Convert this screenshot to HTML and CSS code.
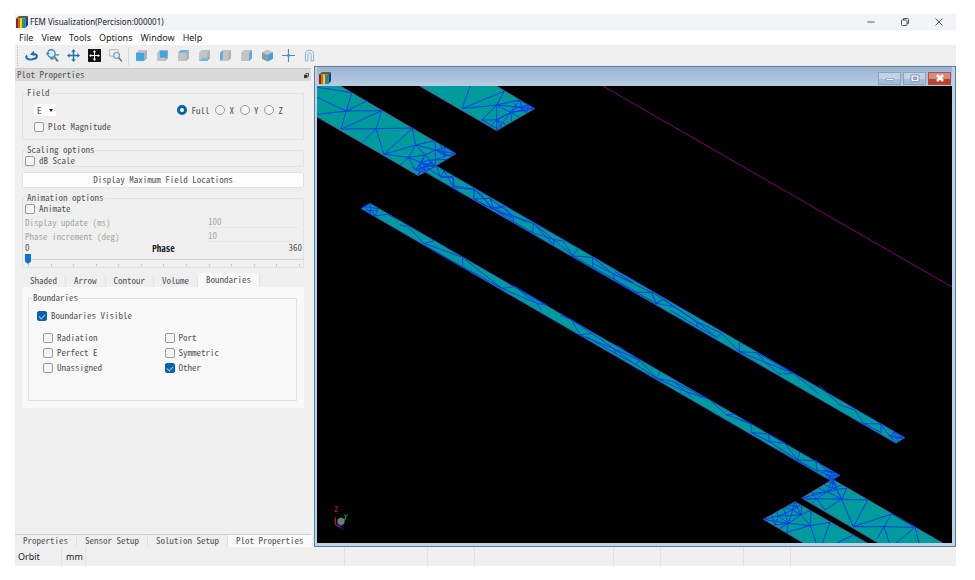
FILE: index.html
```html
<!DOCTYPE html>
<html lang="en">
<head>
    <meta charset="UTF-8">
    <meta name="viewport" content="width=device-width, initial-scale=1.0">
    <title>FEM Visualization</title>
    <link rel="stylesheet" href="styles.css">
</head>
<body>
    <svg class="defs" aria-hidden="true">
        <symbol id="logo" viewBox="0 0 12 12">
            <path d="M0 2.500 3 0h9L9.500 2.500z" fill="#6b5a2a"/>
            <path d="M9.500 2.500 12 0v9l-2.500 3z" fill="#1c3b8c"/>
            <path d="M0 2.500h2V12H0z" fill="#8e1f1f"/>
            <path d="M2 2.500h2V12H2z" fill="#d9641e"/>
            <path d="M4 2.500h2V12H4z" fill="#e8d42c"/>
            <path d="M6 2.500h2V12H6z" fill="#2f9c48"/>
            <path d="M8 2.500h1.500V12H8z" fill="#1e78c8"/>
        </symbol>
        <symbol id="cube" viewBox="0 0 12 12">
            <path d="M1 3.500 3.500 1H11v7.500L8.500 11H1z" fill="#c3c3c3"/>
            <path d="M8.500 3.500 11 1v7.500L8.500 11z" fill="#aeb2b5"/>
        </symbol>
    </svg>

    <div class="app">
        <header class="titlebar">
            <svg class="logo"><use href="#logo"/></svg>
            <span class="title">FEM Visualization(Percision:000001)</span>
            <button class="win-btn" aria-label="Minimize"><svg viewBox="0 0 10 10"><path d="M1.500 5h7"/></svg></button>
            <button class="win-btn" aria-label="Restore"><svg viewBox="0 0 10 10"><rect x="1.500" y="3" width="5.500" height="5.500" rx="1"/><path d="M3.500 3V1.500h4q1 0 1 1v4H7"/></svg></button>
            <button class="win-btn" aria-label="Close"><svg viewBox="0 0 10 10"><path d="M1.500 1.500l7 7M8.500 1.500l-7 7"/></svg></button>
        </header>

        <nav class="menubar">
            <button>File</button>
            <button>View</button>
            <button>Tools</button>
            <button>Options</button>
            <button>Window</button>
            <button>Help</button>
        </nav>

        <div class="toolbar">
            <button aria-label="Orbit"><svg viewBox="0 0 12 12"><path d="M7 4.500c5-.5 5.500 4 0 5-5 .8-7-1.500-5-3.500" fill="none" stroke="#2374ad" stroke-width="2"/><path d="M8 1.500 4.500 5l4.500 1.500z" fill="#2374ad"/></svg></button>
            <button aria-label="Zoom"><svg viewBox="0 0 12 12"><circle cx="5" cy="4.200" r="3.500" fill="#d6eaf5" stroke="#3787b8" stroke-width="1.200"/><path d="M7.500 7l3.500 4.500" stroke="#777" stroke-width="1.800"/><path d="M0 4.200h3M8.500 5.500H12M7 9h-3" stroke="#3787b8" stroke-width="1.200"/></svg></button>
            <button aria-label="Pan"><svg viewBox="0 0 12 12"><path d="M6 0l2 2.500H6.700v2.800h2.800V4L12 6 9.500 8V6.700H6.700v2.800H8L6 12 4 9.500h1.300V6.700H2.500V8L0 6l2.500-2v1.300h2.800V2.500H4z" fill="#2374ad"/></svg></button>
            <button aria-label="Fit all"><svg viewBox="0 0 12 12"><path d="M0 0h12v12H0z" fill="#111"/><path d="M6 2.500v7M2.500 6h7" stroke="#fff"/><path d="M6 1l1.500 2h-3zM6 11l1.500-2h-3zM1 6l2-1.500v3zM11 6l-2-1.500v3z" fill="#fff"/></svg></button>
            <button aria-label="Zoom window"><svg viewBox="0 0 12 12"><path d="M.5 .5h8v6h-8z" fill="none" stroke="#aaa" stroke-width=".7"/><circle cx="7" cy="6" r="2.700" fill="#e0eef6" stroke="#6c9dba"/><path d="M9 8l3 3.500" stroke="#777" stroke-width="1.500"/></svg></button>
            <span class="sep"></span>
            <button aria-label="Front view"><svg viewBox="0 0 12 12"><use href="#cube"/><path d="M1 3.500h7.500V11H1z" fill="#43a5dd"/></svg></button>
            <button aria-label="Back view"><svg viewBox="0 0 12 12"><use href="#cube"/><path d="M3.500 1.500h7V8h-7z" fill="#43a5dd"/></svg></button>
            <button aria-label="Top view"><svg viewBox="0 0 12 12"><use href="#cube"/><path d="M1 3.500 3.500 1H11L8.500 3.500z" fill="#6bb9e4"/></svg></button>
            <button aria-label="Bottom view"><svg viewBox="0 0 12 12"><use href="#cube"/><path d="M1 11l2.500-2.500H11L8.500 11z" fill="#6bb9e4"/></svg></button>
            <button aria-label="Left view"><svg viewBox="0 0 12 12"><use href="#cube"/><path d="M1 3.500 3.500 1v7.500L1 11z" fill="#55afe1"/></svg></button>
            <button aria-label="Right view"><svg viewBox="0 0 12 12"><use href="#cube"/><path d="M8.500 3.500 11 1v7.500L8.500 11z" fill="#55afe1"/></svg></button>
            <button aria-label="Isometric view"><svg viewBox="0 0 12 12"><path d="M6 .5 11 3v6l-5 2.500L1 9V3z" fill="#c3c3c3"/><path d="M1 3l5 2.500v6L1 9z" fill="#8e9aa1"/><path d="M6 5.500 11 3v6l-5 2.500z" fill="#3f9fd6"/></svg></button>
            <button aria-label="Center"><svg viewBox="0 0 12 12"><path d="M6 0v12M0 6h12" stroke="#4a90ba"/><circle cx="6" cy="6" r="1.300" fill="#4a90ba"/></svg></button>
            <button aria-label="Snap"><svg viewBox="0 0 12 12"><path d="M3.500 11H2.200V5a3.800 3.800 0 0 1 7.600 0v6H8.500M4.500 11V5a1.500 1.500 0 0 1 3 0v6M3.500 11h1M7.500 11h1" fill="none" stroke="#86a9bd" stroke-width=".8"/></svg></button>
        </div>

        <main class="workspace">
            <aside class="dock">
                <div class="dock-title">
                    <span>Plot Properties</span>
                    <button aria-label="Float"><svg viewBox="0 0 6 6"><path d="M2 .5h3.500V4H4" fill="none" stroke="#333"/><path d="M0 2h4v4H0z" fill="#333"/></svg></button>
                </div>

                <div class="dock-body">
                    <fieldset class="group">
                        <legend>Field</legend>
                        <div class="field">
                            <div class="field-row">
                                <span class="combo">
                                    <select aria-label="Field type">
                                        <option>E</option>
                                        <option>H</option>
                                    </select>
                                </span>
                                <div class="radios">
                                    <label><input type="radio" name="component" checked>Full</label>
                                    <label><input type="radio" name="component">X</label>
                                    <label><input type="radio" name="component">Y</label>
                                    <label><input type="radio" name="component">Z</label>
                                </div>
                            </div>
                            <label><input type="checkbox">Plot Magnitude</label>
                        </div>
                    </fieldset>

                    <fieldset class="group">
                        <legend>Scaling options</legend>
                        <label><input type="checkbox">dB Scale</label>
                    </fieldset>

                    <button class="wide-btn">Display Maximum Field Locations</button>

                    <fieldset class="group">
                        <legend>Animation options</legend>
                        <label><input type="checkbox">Animate</label>
                        <div class="param">
                            <label for="update">Display update (ms)</label>
                            <input type="text" id="update" value="100" disabled>
                        </div>
                        <div class="param">
                            <label for="increment">Phase increment (deg)</label>
                            <input type="text" id="increment" value="10" disabled>
                        </div>
                        <div class="phase">
                            <span>0</span>
                            <label for="phase">Phase</label>
                            <span class="max">360</span>
                        </div>
                        <input type="range" id="phase" min="0" max="360" value="0">
                        <div class="ticks">
                            <i></i><i></i><i></i><i></i><i></i><i></i><i></i><i></i><i></i><i></i><i></i><i></i><i></i>
                        </div>
                    </fieldset>

                    <div class="tabs">
                        <button>Shaded</button>
                        <button>Arrow</button>
                        <button>Contour</button>
                        <button>Volume</button>
                        <button class="active">Boundaries</button>
                    </div>
                    <div class="tab-panel">
                        <fieldset class="group">
                            <legend>Boundaries</legend>
                            <div class="boundaries">
                                <label><input type="checkbox" checked>Boundaries Visible</label>
                                <div class="bound-grid">
                                    <label><input type="checkbox">Radiation</label>
                                    <label><input type="checkbox">Port</label>
                                    <label><input type="checkbox">Perfect E</label>
                                    <label><input type="checkbox">Symmetric</label>
                                    <label><input type="checkbox">Unassigned</label>
                                    <label><input type="checkbox" checked>Other</label>
                                </div>
                            </div>
                        </fieldset>
                    </div>
                </div>

                <div class="dock-tabs">
                    <button>Properties</button>
                    <button>Sensor Setup</button>
                    <button>Solution Setup</button>
                    <button class="active">Plot Properties</button>
                </div>
            </aside>

            <section class="mdi">
                <div class="mdi-title">
                    <svg class="logo"><use href="#logo"/></svg>
                    <span class="spacer"></span>
                    <button aria-label="Minimize"><svg viewBox="0 0 10 10"><path d="M1.500 5.500h7v2h-7z" fill="#fff" stroke="#6d87a3" stroke-width=".6"/></svg></button>
                    <button aria-label="Maximize"><svg viewBox="0 0 10 10"><path d="M1 2h8v6.500H1z" fill="#fff" stroke="#6d87a3" stroke-width=".8"/><path d="M3.300 4h3.400v2.500H3.300z" fill="#9fb9d6" stroke="#6d87a3" stroke-width=".8"/></svg></button>
                    <button class="close" aria-label="Close"><svg viewBox="0 0 10 10"><path d="M2 2l6 6M8 2l-6 6" stroke="#fff" stroke-width="2.500"/></svg></button>
                </div>
                <div class="view">
                    <svg class="scene" viewBox="951 258 1905 1371" preserveAspectRatio="xMidYMid slice">
                        <path class="axis-line" d="M1809 258 2856 861"/>

                        <!-- upper pads -->
                        <g transform="translate(930 180)">
                            <path class="face" d="M10 30 438 281 380 316 345 336 325 347 10 165z"/>
                            <path class="face" d="M330 79 530 60 674 146 560 212z"/>
                            <path class="mesh" d="M22 82 125 98 93 207 215 152 108 153 22 163M22 112 108 153 172 122M93 207 198 206 215 152M157 247 198 206 307 204 222 283 198 206M307 204 317 255 222 283 295 292 317 255 374 242 377 270 317 255 345 285 295 292M270 315 295 292 317 330 345 285 377 270 438 281 407 262 377 270 375 318 345 285M295 292 335 308 345 285M317 330 335 308 375 318 355 300 335 308 325 345M377 270 405 288 438 281M405 262 405 288 375 300 410 298M317 330 345 320 380 316M325 345 345 320 335 308M345 320 345 336M345 320 360 305 375 318M307 322 317 330 345 336M377 270 425 290M390 252 405 288M355 300 375 300M340 312 378 322 350 330 330 325 368 308"/>
                            <path class="mesh" d="M480 79 456 146 582 94 560 135 456 146M560 135 515 180 560 180 602 157 560 135 560 212M602 157 560 212M582 94 560 135 628 120 602 157 674 146 560 135M628 120 674 146M628 120 640 152 602 157M560 180 602 157 628 172M560 180 590 195M540 200 560 180 575 203M625 140 650 158 655 136 625 140 602 157M610 130 640 152 650 135M515 180 560 205M605 183 602 157"/>
                        </g>

                        <!-- traces -->
                        <path class="face trace" d="M1310 498 2715 1313 2688 1330 1275 516z"/>
                        <path class="face trace" d="M1110 610 2520 1426 2492 1442 1083 626z"/>
                        <g transform="translate(930 180)">
                            <path class="mesh" d="M380 320 392 352 402 332 430 383 428 350 392 352M430 383 492 388 490 416 545 445 514 404 492 388M545 445 580 438 608 474 545 445 512 430M153 446 180 430 182 460 165 440 205 446 195 468 182 445M195 468 232 463 265 480M165 452 200 452"/>
                        </g>
                        <g transform="translate(1200 450)">
                            <path class="mesh" d="M80 52 122 80 160 82 162 108 223 118 221 147 270 145 282 178 223 118M282 178 340 198 340 215 282 178 312 170M270 145 340 198 400 220 398 248 340 215M340 198 378 216M400 220 460 268 398 248M460 268 462 285 400 220M460 268 490 273 518 318 460 268M518 318 533 297M518 318 578 322 578 352 518 318M578 322 637 370 578 340M637 370 645 390 578 352M637 370 700 398 645 365M637 370 755 428 700 426 645 390M755 428 770 462 645 390M0 225 22 228 72 280 103 272M72 280 188 322 188 350 72 285M188 322 305 415 345 410 410 460 305 415M188 350 305 415M345 410 440 465 410 460 425 480"/>
                        </g>
                        <g transform="translate(1680 690)">
                            <path class="mesh" d="M275 185 288 220 310 208 340 230 288 220M275 185 410 275 340 230M310 208 410 275 412 290 330 240M410 275 485 310 470 322 412 290M410 275 470 322M485 310 538 365 538 338M538 365 590 368 617 398 538 365M590 368 700 430 617 398 658 432 700 430 775 490M0 255 35 270 60 315 95 310 35 270M60 315 160 355 95 310M160 355 170 372 80 320M160 355 240 392 170 345M160 355 225 402 240 392 290 445 300 425M170 372 225 402 290 445 340 455 378 485 290 445M340 455 440 505 378 485 395 500M455 515 500 555 520 552 500 555 560 575"/>
                        </g>
                        <g transform="translate(2220 1230)">
                            <path class="mesh" d="M345 0 370 40 422 42 424 68 370 40M422 42 452 82 460 65 485 78 452 82 470 98M445 75 490 85 465 85M460 65 475 95M235 -75 300 -15 345 0M0 30 33 42 35 68 86 72 88 95 35 68M86 72 135 100 88 95 172 150 135 100M172 150 180 125M172 150 228 152 231 183 172 150M228 152 262 182 231 183M262 182 300 196 255 195 272 212 285 188 262 182 290 200M250 188 285 205M240 190 262 182 272 212"/>
                        </g>

                        <!-- lower pads -->
                        <g transform="translate(2220 1230)">
                            <path class="face" d="M278 208 660 429 465 429 185 264z"/>
                            <path class="face" d="M165 275 435 429 240 429 70 328z"/>
                            <path class="mesh" d="M278 208 305 268 320 235M185 264 230 266 383 270 340 350 305 268 255 300 230 266 262 245 185 264M262 245 278 208M262 245 305 268 290 238 262 245 235 235M230 266 215 250 262 245M340 350 455 312 432 350 340 350M432 350 525 352 455 312M432 350 448 399M432 350 412 385M525 352 537 399M525 352 468 399M278 208 290 238 320 235M250 222 278 235 305 225M262 245 278 235 290 238M278 208 278 235M265 215 290 225M200 268 230 266 215 280M265 200 290 215"/>
                            <path class="mesh" d="M165 275 158 300 183 315 165 275M183 315 211 347 213 300 183 315 145 340 211 347 140 367 145 340 70 328 115 318 145 340 158 300 115 318 110 303M211 347 228 399M211 347 270 337 247 399M340 375 290 399M185 288 183 315M135 292 158 300 180 285M145 285 175 290M130 293 145 340M95 315 105 345 115 318M115 318 183 315M105 345 145 340 120 355"/>
                        </g>

                        <!-- orientation triad -->
                        <g class="triad">
                            <path d="M1004 1520h10l-10 15h10" stroke="#a01818"/>
                            <path d="M1033 1543l4 8 6-8M1037 1551l-2 10" stroke="#1d9a2c"/>
                            <path d="M1006 1552v22l14 8" stroke="#d42a2a"/>
                            <circle cx="1023" cy="1564" r="11" fill="#747a76"/>
                            <path d="M1020 1568l14-12" stroke="#21a838"/>
                            <path d="M1010 1570l20 18M1016 1578l16-4" stroke="#2424b8"/>
                        </g>
                    </svg>
                </div>
            </section>
        </main>

        <footer class="statusbar">
            <span class="mode">Orbit</span>
            <span class="unit">mm</span>
            <span class="message"></span>
            <span class="cell wide"></span>
            <span class="cell"></span>
            <span class="cell widest"></span>
            <span class="cell"></span>
            <span class="cell wide"></span>
            <span class="cell"></span>
            <span class="cell"></span>
        </footer>
    </div>
</body>
</html>
```

FILE: styles.css
```css
* {
    box-sizing: border-box;
}
body {
    margin: 0;
    padding: 14px 19px 14px 15px;
    min-height: 100vh;
    display: flex;
    background-color: #fff;
    font: 9px/12px "Noto Sans", sans-serif;
    color: #222;
}
button,
input,
select {
    font: inherit;
    color: inherit;
    margin: 0;
    padding: 0;
    border: none;
    background: none;
}
.defs {
    position: absolute;
    width: 0;
    height: 0;
}
.app {
    flex: 1;
    display: flex;
    flex-direction: column;
    background-color: #efefef;
}
.logo {
    width: 12px;
    height: 12px;
}

/* window chrome */
.titlebar {
    display: flex;
    align-items: center;
    height: 16px;
    padding-left: 1px;
    background-color: #f1f3f6;
}
.title {
    flex: 1;
    padding-left: 2px;
    font-size: 8px;
}
.win-btn {
    width: 34px;
    height: 16px;
    display: grid;
    place-items: center;
}
.win-btn svg {
    width: 10px;
    height: 10px;
    fill: none;
    stroke: #555;
}
.menubar {
    display: flex;
    align-items: center;
    gap: 8px;
    height: 15px;
    padding-left: 4px;
    background-color: #fff;
}
.toolbar {
    display: flex;
    align-items: center;
    height: 21px;
    margin-left: 2px;
    padding-left: 3px;
    border-left: 1px dotted #bbb;
}
.toolbar button {
    width: 21px;
    height: 18px;
    display: grid;
    place-items: center;
}
.toolbar svg {
    width: 13px;
    height: 13px;
}
.sep {
    width: 1px;
    height: 18px;
    margin: 0 2px;
    background-color: #dadada;
}

/* left dock */
.workspace {
    flex: 1;
    display: flex;
}
.dock {
    width: 299px;
    padding: 2px 3px 0 0;
    display: flex;
    flex-direction: column;
    font-family: "Noto Sans CJK SC", "Liberation Mono", monospace;
    font-feature-settings: "hwid";
    color: #555;
}
.dock-title {
    display: flex;
    justify-content: space-between;
    align-items: center;
    height: 13px;
    padding: 0 2px;
    background-color: #d9d9d9;
    border-top: 1px solid #cacaca;
}
.dock-title svg {
    display: block;
    width: 5px;
    height: 5px;
}
.dock-body {
    flex: 1;
    padding: 7px 7px 8px;
}
.group {
    margin: 0 0 5px;
    padding: 0 0 0 2px;
    border: 1px solid #e2e2e2;
    min-width: 0;
}
.group legend {
    margin-left: 1px;
    padding: 0 1px;
    line-height: 10px;
}
.group label {
    display: flex;
    align-items: center;
    gap: 4px;
    line-height: 11px;
}
.field {
    padding: 6px 20px 7px 9px;
}
.field-row {
    display: flex;
    align-items: center;
    justify-content: space-between;
    margin-bottom: 5px;
}
.combo {
    position: relative;
}
.combo select {
    display: block;
    appearance: none;
    width: 22px;
    height: 12px;
    padding-left: 3px;
    line-height: 11px;
    background-color: #fff;
    border-radius: 2px;
}
.combo::after {
    content: "";
    position: absolute;
    right: 3px;
    top: 5px;
    border: 2px solid transparent;
    border-top: 3px solid #222;
    pointer-events: none;
}
.radios {
    display: flex;
    gap: 6px;
}
input[type="checkbox"],
input[type="radio"] {
    appearance: none;
    width: 10px;
    height: 10px;
    border: 1px solid #999;
    border-radius: 2px;
    background-color: #f5f5f5;
    display: grid;
    place-items: center;
}
input[type="radio"] {
    border-radius: 50%;
}
input[type="radio"]:checked {
    border: 3px solid #0a60b0;
    background-color: #fff;
}
input[type="checkbox"]:checked {
    border-color: #0a60b0;
    background-color: #0a60b0;
}
input[type="checkbox"]:checked::before {
    content: "";
    width: 5px;
    height: 3px;
    border: solid #9fc4e6;
    border-width: 0 0 1px 1px;
    transform: rotate(-45deg);
}
.wide-btn {
    display: block;
    width: 100%;
    height: 16px;
    margin-bottom: 5px;
    border: 1px solid #e2e2e2;
    border-radius: 2px;
    background-color: #fdfdfd;
    line-height: 14px;
}
.param {
    display: grid;
    grid-template-columns: 183px 1fr;
    align-items: center;
    padding-right: 4px;
    margin-top: 2px;
    color: #a8a8a8;
}
.param input {
    width: 100%;
    height: 12px;
    border-bottom: 1px solid #e6e6e6;
}
.phase {
    display: grid;
    grid-template-columns: 1fr auto 1fr;
    padding-right: 1px;
}
.phase label {
    font-weight: bold;
    color: #222;
}
.max {
    text-align: right;
}
input[type="range"] {
    display: block;
    appearance: none;
    width: 100%;
    height: 10px;
    background: linear-gradient(#d6d6d6, #d6d6d6) center / 100% 1px no-repeat;
}
input[type="range"]::-webkit-slider-thumb {
    appearance: none;
    width: 6px;
    height: 10px;
    background-color: #0a74d0;
    clip-path: polygon(0 0, 100% 0, 100% 75%, 50% 100%, 0 75%);
}
.ticks {
    display: flex;
    justify-content: space-between;
    padding: 0 3px 1px;
}
.ticks i {
    width: 1px;
    height: 2px;
    background-color: #c4c4c4;
}
.tabs {
    display: flex;
    align-items: flex-end;
}
.tabs button {
    height: 12px;
    padding: 0 8px;
    border-right: 1px solid #e4e4e4;
    line-height: 12px;
}
.tabs .active {
    height: 14px;
    background-color: #f9f9f9;
}
.tab-panel {
    padding: 6px 7px 7px 6px;
    background-color: #f8f8f8;
}
.tab-panel .group {
    margin: 0;
}
.boundaries {
    padding: 7px 6px 27px;
}
.bound-grid {
    display: grid;
    grid-template-columns: 1fr 1fr;
    row-gap: 4px;
    padding: 11px 4px 0 6px;
}
.dock-tabs {
    display: flex;
    height: 13px;
    border-top: 1px solid #cfcfcf;
}
.dock-tabs button {
    flex: none;
    padding: 0 8px;
    border-right: 1px solid #e0e0e0;
    line-height: 12px;
    white-space: nowrap;
}
.dock-tabs .active {
    border-right: none;
    background-color: #fafafa;
}

/* plot window */
.mdi {
    flex: 1;
    min-width: 0;
    display: flex;
    flex-direction: column;
    border: 1px solid #5c7f97;
    background-color: #b9d3e8;
    padding: 0 3px 3px 2px;
}
.mdi-title {
    display: flex;
    align-items: center;
    gap: 2px;
    height: 19px;
    padding: 3px 1px 0 2px;
    background: linear-gradient(#9db5d2, #b7cce4);
}
.spacer {
    flex: 1;
}
.mdi-title button {
    width: 23px;
    height: 13px;
    display: grid;
    place-items: center;
    border: 1px solid #8ba5c0;
    background: linear-gradient(#c0d3e7 50%, #a4bcd6 50%);
}
.mdi-title button svg {
    width: 10px;
    height: 10px;
}
.mdi-title .close {
    border-color: #a5544c;
    background: linear-gradient(#d98a7c 50%, #c2402a 50%);
}
.view {
    flex: 1;
    display: grid;
    min-height: 0;
    background-color: #000;
}
.scene {
    display: block;
    width: 100%;
    height: 100%;
}
.face {
    fill: #009b9b;
    stroke: #7a4a9a;
    stroke-width: 2;
}
.trace {
    stroke: #3a3ad0;
}
.mesh {
    fill: none;
    stroke: #0a3cf0;
    stroke-width: 3;
}
.axis-line {
    stroke: #800080;
    stroke-width: 3;
}
.triad path {
    fill: none;
    stroke-width: 3;
}

/* status bar */
.statusbar {
    display: flex;
    height: 19px;
    line-height: 19px;
}
.mode {
    width: 46px;
    padding-left: 3px;
}
.unit {
    width: 25px;
    padding-left: 4px;
    border-left: 1px solid #e2e2e2;
    border-right: 1px solid #e2e2e2;
}
.message {
    width: 258px;
}
.cell {
    width: 47px;
    border-left: 1px solid #e2e2e2;
}
.cell.wide {
    width: 83px;
}
.cell.widest {
    width: 139px;
}
.cell:last-child {
    flex: 1;
}
```
